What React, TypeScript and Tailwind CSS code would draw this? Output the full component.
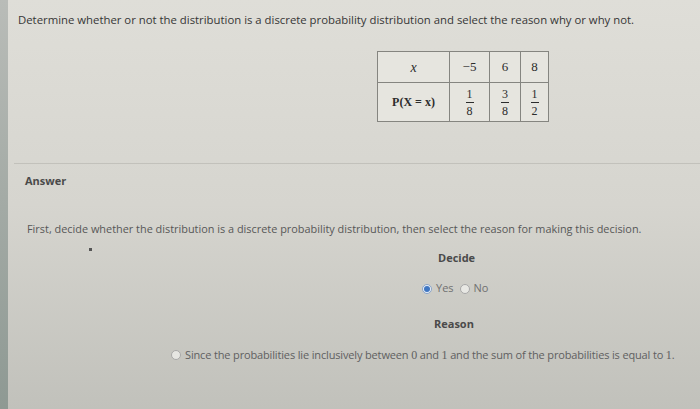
export default function App() {
  const sans = { fontFamily: '"Open Sans", "Noto Sans", sans-serif' };
  const serif = { fontFamily: '"Liberation Serif", "DejaVu Serif", serif' };
  return (
    <div className="flex h-[409px] w-[700px] overflow-hidden bg-linear-to-b from-[#dfded8] via-[#d6d5cf] to-[#c1c1bb]" style={sans}>
      <div className="w-[8px] shrink-0 bg-linear-to-b from-[#b9bcb8] to-[#8e9993]" />
      <div className="flex flex-1 flex-col">
        <div className="pl-[10px] pt-[11px] text-[11.35px] text-[#363636]">
          Determine whether or not the distribution is a discrete probability distribution and select the reason why or why not.
        </div>
        <div className="ml-[369px] mt-[23px] w-[172px]">
          <table className="w-full border-collapse bg-[#e6e5df] text-[#2c2c2c]" style={serif}>
            <tbody>
              <tr className="h-[31px]">
                <td className="w-[72px] border border-[#858580] text-center text-[14px] italic" style={serif}>x</td>
                <td className="w-[40px] border border-[#858580] text-center text-[13px]" style={serif}>−5</td>
                <td className="w-[31px] border border-[#858580] text-center text-[13px]" style={serif}>6</td>
                <td className="border border-[#858580] text-center text-[13px]" style={serif}>8</td>
              </tr>
              <tr className="h-[39px]">
                <td className="border border-[#858580] text-center text-[12px] font-bold" style={serif}>P(X = x)</td>
                {[["1", "8"], ["3", "8"], ["1", "2"]].map(([n, d], i) => (
                  <td key={i} className="border border-[#858580] text-center text-[12px] leading-[12px]" style={serif}>
                    <div className="inline-flex flex-col items-center">
                      <span>{n}</span>
                      <span className="my-[2px] h-px w-[8px] bg-[#2c2c2c]" />
                      <span>{d}</span>
                    </div>
                  </td>
                ))}
              </tr>
            </tbody>
          </table>
        </div>
        <div className="ml-[6px] mt-[41px] h-px bg-[#c2c1bb]" />
        <div className="pl-[17px] pt-[9px] text-[11px] font-bold text-[#4a4a4a]">Answer</div>
        <div className="pl-[19px] pt-[31px] text-[10.9px] text-[#575757]">
          First, decide whether the distribution is a discrete probability distribution, then select the reason for making this decision.
        </div>
        <div className="relative">
          <span className="absolute left-[81px] top-[11px] h-[3px] w-[3px] bg-[#555]" />
        </div>
        <div className="ml-[430px] pt-[13px] text-[11px] font-bold text-[#4a4a4a]">Decide</div>
        <div className="ml-[414px] mt-[14px] flex items-center text-[11px] text-[#707070]">
          <span className="flex h-[10px] w-[10px] items-center justify-center rounded-full border border-[#8aa4c8] bg-[#e8eef6]">
            <span className="h-[6px] w-[6px] rounded-full bg-[#3f76c2]" />
          </span>
          <span className="ml-[4px]">Yes</span>
          <span className="ml-[6px] h-[10px] w-[10px] rounded-full border border-[#a8a8a8] bg-[#e8e8e4]" />
          <span className="ml-[4px]">No</span>
        </div>
        <div className="ml-[426px] pt-[19px] text-[11px] font-bold text-[#4a4a4a]">Reason</div>
        <div className="ml-[163px] mt-[14px] flex items-center text-[11px] tracking-[-0.15px] text-[#606060]">
          <span className="h-[10px] w-[10px] rounded-full border border-[#a8a8a8] bg-[#e6e6e2]" />
          <span className="ml-[4px]">Since the probabilities lie inclusively between <span style={serif} className="text-[12px]">0</span> and <span style={serif} className="text-[12px]">1</span> and the sum of the probabilities is equal to <span style={serif} className="text-[12px]">1</span>.</span>
        </div>
      </div>
    </div>
  );
}
